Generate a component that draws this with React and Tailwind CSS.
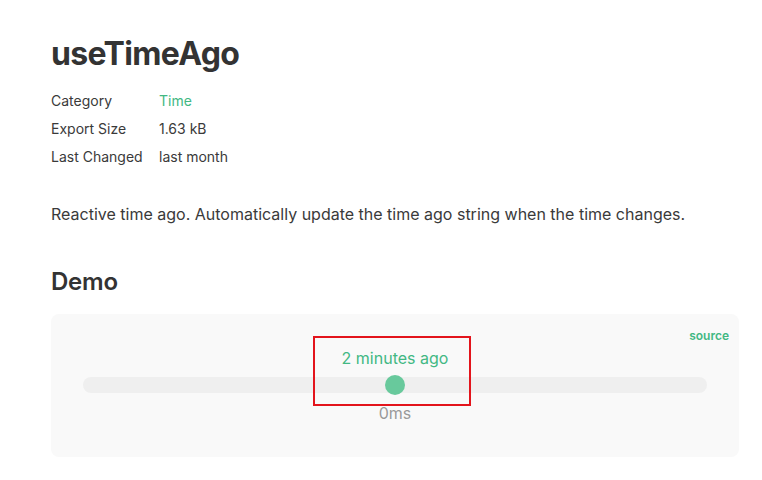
export default function App() {
  return (
    <div className="min-h-[480px] w-[762px] bg-white text-[#3a3a3a]" style={{ fontFamily: 'Inter, "Noto Sans", sans-serif' }}>
      <div className="w-[688px] pl-[51px] box-content pt-[34px]">
        <h1 className="text-[32px] font-bold leading-[40px] tracking-[-0.02em] text-[#333]">useTimeAgo</h1>
        <div className="mt-[13px] grid grid-cols-[108px_1fr] text-[14px] leading-[28px] text-[#3a3a3a]">
          <div>Category</div>
          <div className="text-[#42b883]">Time</div>
          <div>Export Size</div>
          <div>1.63 kB</div>
          <div>Last Changed</div>
          <div>last month</div>
        </div>
        <p className="mt-[29px] text-[16px] leading-[28px] text-[#3a3a3a]">
          Reactive time ago. Automatically update the time ago string when the time changes.
        </p>
        <h2 className="mt-[38px] text-[24px] font-semibold leading-[32px] tracking-[-0.01em] text-[#333]">Demo</h2>
        <div className="relative mt-[16px] rounded-[8px] bg-[#f9f9f9] px-[32px] pt-[32px] pb-[32px]">
          <a className="absolute right-[10px] top-[14px] text-[12px] font-semibold leading-[16px] text-[#42b883]">source</a>
          <div className="text-center text-[16px] leading-[24px] text-[#42b883]">2 minutes ago</div>
          <div className="relative mt-[7px] h-[16px] rounded-full bg-[#efefef]">
            <div className="absolute left-1/2 top-1/2 h-[20px] w-[20px] -translate-x-1/2 -translate-y-1/2 rounded-full bg-[#68c99c]" />
          </div>
          <div className="mt-[8px] text-center text-[16px] leading-[24px] text-[#999]">0ms</div>
          <div className="pointer-events-none absolute left-[262px] top-[22px] h-[70px] w-[158px] border-2 border-[#e3141c]" />
        </div>
      </div>
    </div>
  );
}
